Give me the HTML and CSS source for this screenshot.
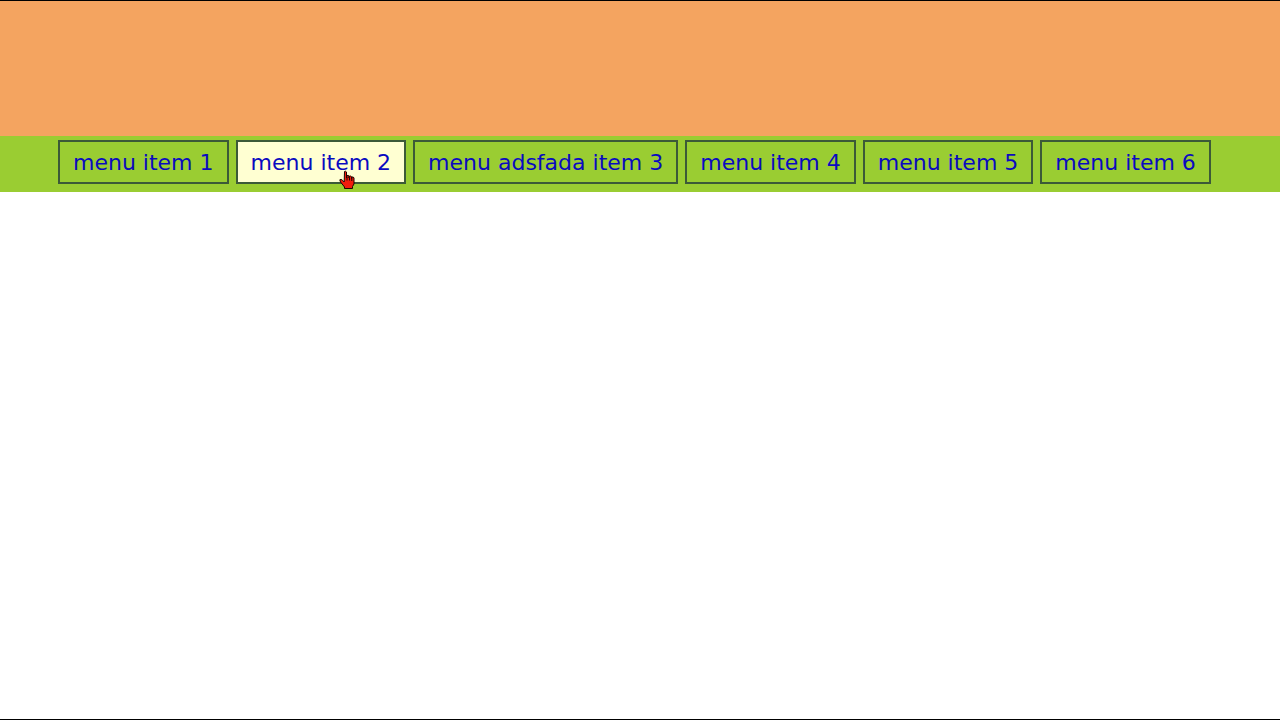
FILE: index.html
```html
<!DOCTYPE html>
<html lang="en">
<head>
<meta charset="utf-8">
<title>Menu</title>
<link rel="stylesheet" href="styles.css">
</head>
<body>
<header class="banner"></header>
<nav class="nav" aria-label="Main">
  <ul class="menu">
    <li><a class="menu-link" href="#">menu item 1</a></li>
    <li><a class="menu-link active" href="#">menu item 2<svg class="pointer" viewBox="0 0 16 20" aria-hidden="true"><path d="M5.5 1.5Q6.8.7 7.5 2V8L8 5.5Q9.2 5 10 6V8L10.5 6Q11.8 5.5 12.5 6.8V8.5L13 7Q14.5 6.5 15 8V14L13.5 16.5V18.5H5.5V17L1.5 12 .8 9.8Q2 8.8 3.5 10.2L5.2 12Z"/><path d="M8 7V10.5M10.5 7.5V10.5M12.8 8V11"/></svg></a></li>
    <li><a class="menu-link" href="#">menu adsfada item 3</a></li>
    <li><a class="menu-link" href="#">menu item 4</a></li>
    <li><a class="menu-link" href="#">menu item 5</a></li>
    <li><a class="menu-link" href="#">menu item 6</a></li>
  </ul>
</nav>
</body>
</html>
```
FILE: styles.css
```css
* {
  box-sizing: border-box;
}

body {
  margin: 0;
  min-height: 100vh;
  background: #fff;
  border-top: 1px solid #000;
  border-bottom: 1px solid #000;
  font: 22px/28px Verdana, "DejaVu Sans", sans-serif;
}

.banner {
  height: 135px;
  background: #f4a460;
}

.nav {
  padding: 4px 58px 8px;
  background: #9acd32;
}

.menu {
  display: flex;
  gap: 7px;
  margin: 0;
  padding: 0;
  list-style: none;
}

.menu-link {
  position: relative;
  display: block;
  padding: 7px 13px 5px;
  border: 2px solid #3c5a38;
  color: #0a0ac0;
  text-decoration: none;
  white-space: nowrap;
}

.menu-link.active {
  background: #ffffd2;
}

.pointer {
  position: absolute;
  right: 49px;
  bottom: -8px;
  width: 16px;
  height: 20px;
  fill: #f21c0d;
  stroke: #1c0500;
  stroke-width: 1;
}
```
